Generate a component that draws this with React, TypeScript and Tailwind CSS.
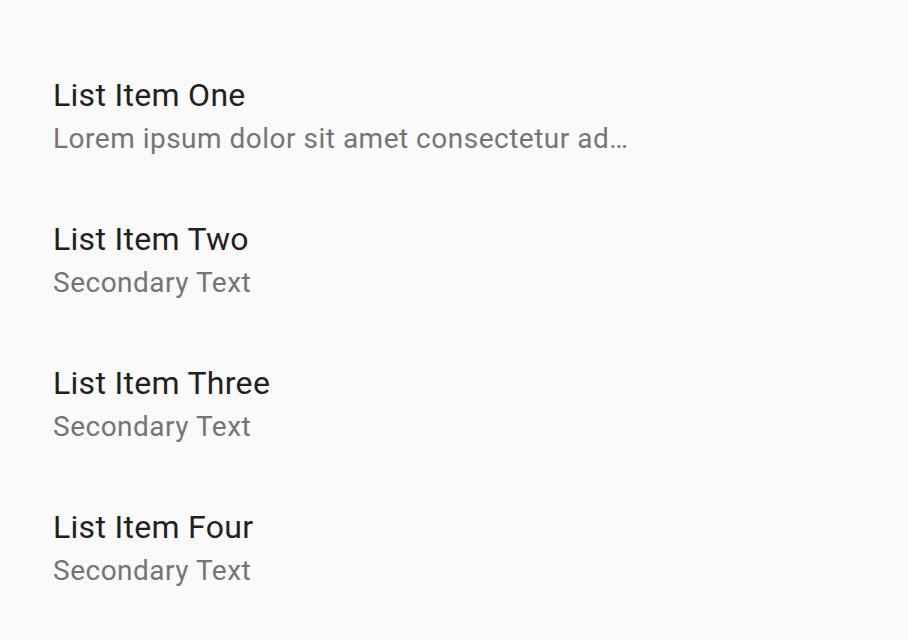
import React from 'react';

type Item = { primary: string; secondary: string };

const items: Item[] = [
  { primary: 'List Item One', secondary: 'Lorem ipsum dolor sit amet consectetur adipiscing elit sed do eiusmod' },
  { primary: 'List Item Two', secondary: 'Secondary Text' },
  { primary: 'List Item Three', secondary: 'Secondary Text' },
  { primary: 'List Item Four', secondary: 'Secondary Text' },
];

const App: React.FC = () => {
  return (
    <div className="min-h-[640px] w-full bg-[#fafafa] pt-[43px] font-['Roboto',sans-serif]">
      <ul className="flex flex-col">
        {items.map((item) => (
          <li key={item.primary} className="flex h-[144px] flex-col justify-center pl-[53px]">
            <div className="w-[578px]">
              <div className="truncate text-[32px] leading-[48px] tracking-[0.3px] text-[#212121]">{item.primary}</div>
              <div className="truncate text-[28px] leading-[40px] tracking-[0.5px] text-[#757575]">{item.secondary}</div>
            </div>
          </li>
        ))}
      </ul>
    </div>
  );
};

export default App;
